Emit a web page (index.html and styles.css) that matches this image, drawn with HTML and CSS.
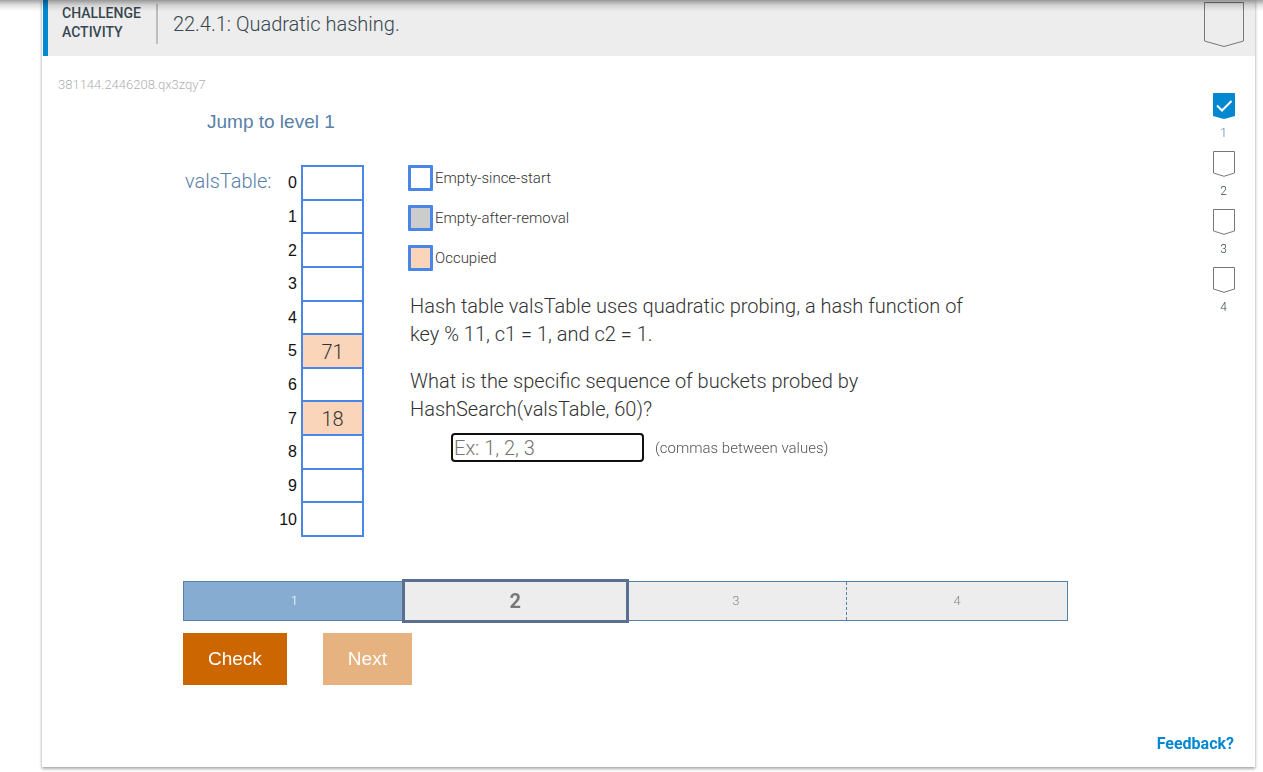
FILE: index.html
```html
<!DOCTYPE html>
<html lang="en">
<head>
<meta charset="utf-8">
<title>22.4.1: Quadratic hashing.</title>
<link rel="stylesheet" href="styles.css">
</head>
<body>
<div class="top-shade"></div>
<article class="card">
  <header class="card-header">
    <div class="kind">CHALLENGE<br>ACTIVITY</div>
    <h1 class="title">22.4.1: Quadratic hashing.</h1>
    <svg class="bookmark-large" width="40" height="46" viewBox="0 0 40 46"><path d="M.5 .5H39.5V39L20 44.500L.5 39Z" fill="none" stroke="#777"/></svg>
  </header>
  <div class="card-body">
    <main class="main">
      <div class="activity-id">381144.2446208.qx3zqy7</div>
      <div class="tool">
        <button class="jump" type="button">Jump to level 1</button>
        <div class="question">
          <div class="table-area">
            <span class="table-name">valsTable:</span>
            <table class="hash">
              <tr><th scope="row">0</th><td></td></tr>
              <tr><th scope="row">1</th><td></td></tr>
              <tr><th scope="row">2</th><td></td></tr>
              <tr><th scope="row">3</th><td></td></tr>
              <tr><th scope="row">4</th><td></td></tr>
              <tr><th scope="row">5</th><td class="occupied">71</td></tr>
              <tr><th scope="row">6</th><td></td></tr>
              <tr><th scope="row">7</th><td class="occupied">18</td></tr>
              <tr><th scope="row">8</th><td></td></tr>
              <tr><th scope="row">9</th><td></td></tr>
              <tr><th scope="row">10</th><td></td></tr>
            </table>
          </div>
          <div class="details">
            <ul class="legend">
              <li><span class="swatch"></span>Empty-since-start</li>
              <li><span class="swatch removed"></span>Empty-after-removal</li>
              <li><span class="swatch occupied"></span>Occupied</li>
            </ul>
            <div class="prompt">
              <p>Hash table valsTable uses quadratic probing, a hash function of<br>key % 11, c1 = 1, and c2 = 1.</p>
              <p><label for="answer">What is the specific sequence of buckets probed by<br>HashSearch(valsTable, 60)?</label></p>
            </div>
            <div class="answer-row">
              <input class="answer" id="answer" type="text" placeholder="Ex: 1, 2, 3" autocomplete="off" autofocus>
              <span class="hint">(commas between values)</span>
            </div>
          </div>
        </div>
        <div class="progress">
          <div class="step done">1</div>
          <div class="step current">2</div>
          <div class="step">3</div>
          <div class="step last">4</div>
        </div>
        <div class="actions">
          <button class="action" type="button">Check</button>
          <button class="action" type="button" disabled>Next</button>
        </div>
      </div>
    </main>
    <aside class="rail">
      <div class="level first"><svg width="22" height="26" viewBox="0 0 22 26"><path d="M0 0H22V23L11 26L0 23Z" fill="#0288d1"/><path d="M4 12.500L9 17.500L18.500 8" fill="none" stroke="#fff" stroke-width="2"/></svg><span>1</span></div>
      <div class="level"><svg width="22" height="26" viewBox="0 0 22 26"><path d="M.5 .5H21.500V22L11 25.300L.5 22Z" fill="none" stroke="#777"/></svg><span>2</span></div>
      <div class="level"><svg width="22" height="26" viewBox="0 0 22 26"><path d="M.5 .5H21.500V22L11 25.300L.5 22Z" fill="none" stroke="#777"/></svg><span>3</span></div>
      <div class="level"><svg width="22" height="26" viewBox="0 0 22 26"><path d="M.5 .5H21.500V22L11 25.300L.5 22Z" fill="none" stroke="#777"/></svg><span>4</span></div>
    </aside>
  </div>
  <footer class="card-footer"><button class="feedback" type="button">Feedback?</button></footer>
</article>
</body>
</html>
```
FILE: styles.css
```css
* { box-sizing: border-box; }
body {
  margin: 0;
  background: #fff;
  color: #37474f;
  font-family: Roboto, sans-serif;
  font-weight: 300;
}
button { font: inherit; border: 0; margin: 0; padding: 0; background: none; cursor: pointer; }
.top-shade {
  position: fixed;
  top: 0;
  left: 0;
  right: 0;
  height: 11px;
  background: linear-gradient(rgba(0, 0, 0, .36), rgba(0, 0, 0, .12) 45%, rgba(0, 0, 0, 0));
  pointer-events: none;
}
.card {
  margin: 0 8px 5px 42px;
  box-shadow: 0 2px 3px rgba(0, 0, 0, .3), 0 0 2px 1px rgba(0, 0, 0, .08);
}
.card-header {
  display: flex;
  align-items: flex-start;
  height: 56px;
  margin-left: 1px;
  padding: 4px 11px 0 14px;
  border-left: 5px solid #0288d1;
  background: #ededed;
}
.kind {
  padding-right: 15px;
  font-size: 14px;
  line-height: 19px;
  font-weight: 500;
}
.title {
  flex: 1;
  margin: 0;
  padding-left: 15px;
  border-left: 2px solid #bdbdbd;
  font-size: 20px;
  line-height: 40px;
  font-weight: 300;
}
.bookmark-large { margin-top: -2px; }
.card-body { display: flex; }
.main { flex: 1; padding: 18px 124px 0 16px; }
.activity-id { font-size: 13px; line-height: 22px; color: #b0b0b0; }
.tool { padding: 11px 0 0 125px; }
.jump {
  display: block;
  margin-left: 24px;
  font: 19px/30px "Liberation Sans", Arial, sans-serif;
  color: #5780a8;
}
.question { display: flex; margin-top: 28px; color: #333; }
.table-area { display: flex; align-items: flex-start; width: 181px; margin-right: 44px; }
.table-name { flex: 1; padding-left: 2px; font-size: 20px; line-height: 32px; color: #5780a8; }
.hash { border-collapse: collapse; height: 372px; }
.hash tr { height: 33px; }
.hash th {
  padding: 1px 4px 0 0;
  text-align: right;
  font: 16px/18px "Liberation Sans", Arial, sans-serif;
  color: #111;
}
.hash td {
  width: 61px;
  padding: 2px 0 0;
  border: 2px solid #4a86e8;
  text-align: center;
  font-size: 20px;
  line-height: 24px;
}
.occupied { background: #fbd5b9; }
.removed { background: #ccc; }
.details { flex: 1; }
.legend { display: grid; gap: 14px; margin: 0; padding: 0; list-style: none; }
.legend li { display: flex; align-items: center; gap: 2px; font-size: 15px; line-height: 26px; }
.swatch { width: 25px; height: 26px; border: 3px solid #4a86e8; border-radius: 1px; }
.prompt { padding: 21px 0 0 2px; font-size: 20px; line-height: 28px; }
.prompt p { margin: 0 0 19px; }
.answer-row { display: flex; align-items: center; gap: 11px; margin: -9px 0 0 43px; }
.answer {
  width: 193px;
  height: 29px;
  padding: 0 1px;
  border: 2px solid #101010;
  border-radius: 4px;
  outline: 0;
  font: 300 20px/24px Roboto, sans-serif;
}
.answer::placeholder { color: #757575; }
.hint { font-size: 15px; line-height: 24px; color: #555; }
.progress {
  display: grid;
  grid-template-columns: repeat(4, 1fr);
  height: 40px;
  margin-top: 44px;
  border: 1px solid #5780a8;
  background: #ededed;
}
.step { text-align: center; font-size: 13px; line-height: 38px; color: #888; }
.done { background: #87acd2; color: #fff; }
.current {
  margin: -3px;
  border: 3px solid #586f91;
  font-size: 20px;
  font-weight: 700;
  color: #777;
  background: #ededed;
}
.last { border-left: 1px dashed #5780a8; }
.actions { display: flex; gap: 36px; margin-top: 12px; }
.action {
  padding: 0 25px;
  background: #cc6600;
  color: #fff;
  font: 19px/52px "Liberation Sans", Arial, sans-serif;
}
.action:disabled { background: #e6b280; }
.rail {
  display: flex;
  flex-direction: column;
  align-items: center;
  gap: 16px;
  width: 63px;
  padding-top: 37px;
}
.level { display: flex; flex-direction: column; align-items: center; gap: 6px; height: 42px; font-size: 12px; line-height: 16px; }
.level svg { flex: none; }
.first { color: #5780a8; }
.card-footer { padding: 47px 21px 11px; text-align: right; }
.feedback { font-size: 16px; line-height: 24px; font-weight: 700; color: #0288d1; }
```
